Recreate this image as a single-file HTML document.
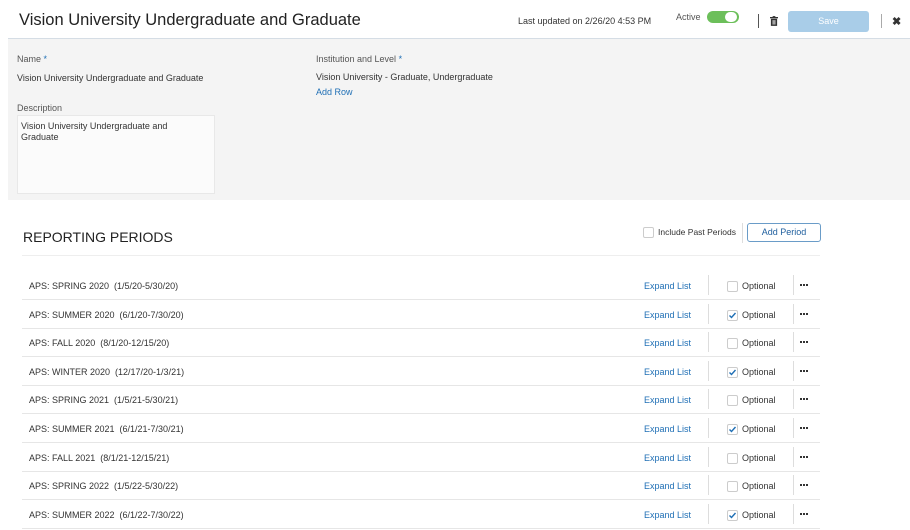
<html><head><style>
body{margin:0;width:910px;height:530px;overflow:hidden;background:#fff;font-family:"Liberation Sans",sans-serif;position:relative}
.a{position:absolute;white-space:nowrap}
.s{font-size:9px;color:#333}
.l{font-size:9px;color:#555}
.b{color:#1f6fb5}
.row{position:absolute;left:22px;width:798px;height:28px;border-bottom:1px solid #e6e6e6}
.row span{position:absolute;top:10px;font-size:9px;white-space:pre}
.cb{position:absolute;width:9px;height:9px;border:1px solid #ccc;border-radius:2px;background:#fff}
.vl{position:absolute;width:1px;height:20px;background:#ddd;top:4px}
.dt{position:absolute;top:13px;width:2px;height:2px;background:#333}
</style></head><body>
<div class="a" style="left:19px;top:11px;font-size:16.5px;color:#222">Vision University Undergraduate and Graduate</div>
<div class="a s" style="left:518px;top:16px">Last updated on 2/26/20 4:53 PM</div>
<div class="a s" style="left:676px;top:12px;color:#555">Active</div>
<div class="a" style="left:707px;top:11px;width:32px;height:12px;border-radius:7px;background:#6cbf5a"></div>
<div class="a" style="left:725px;top:12px;width:12px;height:10px;border-radius:5px;background:#fff"></div>
<div class="a" style="left:758px;top:14px;width:1px;height:14px;background:#555"></div>
<svg class="a" style="left:770px;top:16px" width="8" height="10" viewBox="0 0 9 11"><rect x="0" y="1" width="9" height="1.5" fill="#333"/><rect x="3" y="0" width="3" height="1.5" fill="#333"/><rect x="1" y="3" width="7" height="8" fill="#333"/><rect x="3" y="4.5" width="1" height="5" fill="#fff"/><rect x="5" y="4.5" width="1" height="5" fill="#fff"/></svg>
<div class="a" style="left:788px;top:11px;width:81px;height:21px;background:#a9cde8;border-radius:3px;color:#fff;font-size:9px;text-align:center;line-height:21px">Save</div>
<div class="a" style="left:881px;top:14px;width:1px;height:14px;background:#aaa"></div>
<div class="a" style="left:892px;top:15px;font-size:11px;font-weight:bold;color:#333">✖</div>
<div class="a" style="left:8px;top:38px;width:902px;height:161px;background:#f4f4f4;border-top:1px solid #d5dde5"></div>
<div class="a l" style="left:17px;top:54px">Name <span class="b">*</span></div>
<div class="a s" style="left:17px;top:73px">Vision University Undergraduate and Graduate</div>
<div class="a l" style="left:17px;top:103px">Description</div>
<div class="a" style="left:17px;top:115px;width:196px;height:77px;background:#fbfbfb;border:1px solid #e8e8e8"></div>
<div class="a s" style="left:21px;top:121px;line-height:11px">Vision University Undergraduate and<br>Graduate</div>
<div class="a l" style="left:316px;top:54px">Institution and Level <span class="b">*</span></div>
<div class="a s" style="left:316px;top:72px">Vision University - Graduate, Undergraduate</div>
<div class="a s b" style="left:316px;top:87px">Add Row</div>
<div class="a" style="left:23px;top:229px;font-size:14px;color:#222">REPORTING PERIODS</div>
<div class="cb" style="left:643px;top:227px"></div>
<div class="a s" style="left:658px;top:227px;font-size:8.5px">Include Past Periods</div>
<div class="a" style="left:742px;top:223px;width:1px;height:20px;background:#ddd"></div>
<div class="a" style="left:747px;top:223px;width:72px;height:17px;border:1px solid #6a9cc8;border-radius:3px;font-size:9px;color:#1f5f9e;text-align:center;line-height:17px">Add Period</div>
<div class="a" style="left:22px;top:255px;width:798px;height:1px;background:#eee"></div>
<div id="rows"></div>
<script>
var r=[["APS: SPRING 2020  (1/5/20-5/30/20)",0],["APS: SUMMER 2020  (6/1/20-7/30/20)",1],["APS: FALL 2020  (8/1/20-12/15/20)",0],["APS: WINTER 2020  (12/17/20-1/3/21)",1],["APS: SPRING 2021  (1/5/21-5/30/21)",0],["APS: SUMMER 2021  (6/1/21-7/30/21)",1],["APS: FALL 2021  (8/1/21-12/15/21)",0],["APS: SPRING 2022  (1/5/22-5/30/22)",0],["APS: SUMMER 2022  (6/1/22-7/30/22)",1]];
var h="";r.forEach(function(x,i){var t=271+i*28.6;h+='<div class="row" style="top:'+t+'px"><span style="left:7px;color:#333">'+x[0]+'</span><span style="left:622px;color:#1f6fb5">Expand List</span><div class="vl" style="left:686px"></div><div class="cb" style="left:705px;top:10px"></div>'+(x[1]?'<svg style="position:absolute;left:706px;top:11px" width="9" height="9" viewBox="0 0 9 9"><path d="M1.5 4.5 L3.5 6.5 L7.5 2" stroke="#1f6fb5" stroke-width="1.4" fill="none"/></svg>':'')+'<span style="left:720px;color:#333">Optional</span><div class="vl" style="left:771px"></div><div class="dt" style="left:778px"></div><div class="dt" style="left:781px"></div><div class="dt" style="left:784px"></div></div>'});
document.getElementById("rows").innerHTML=h;
</script>
</body></html>
